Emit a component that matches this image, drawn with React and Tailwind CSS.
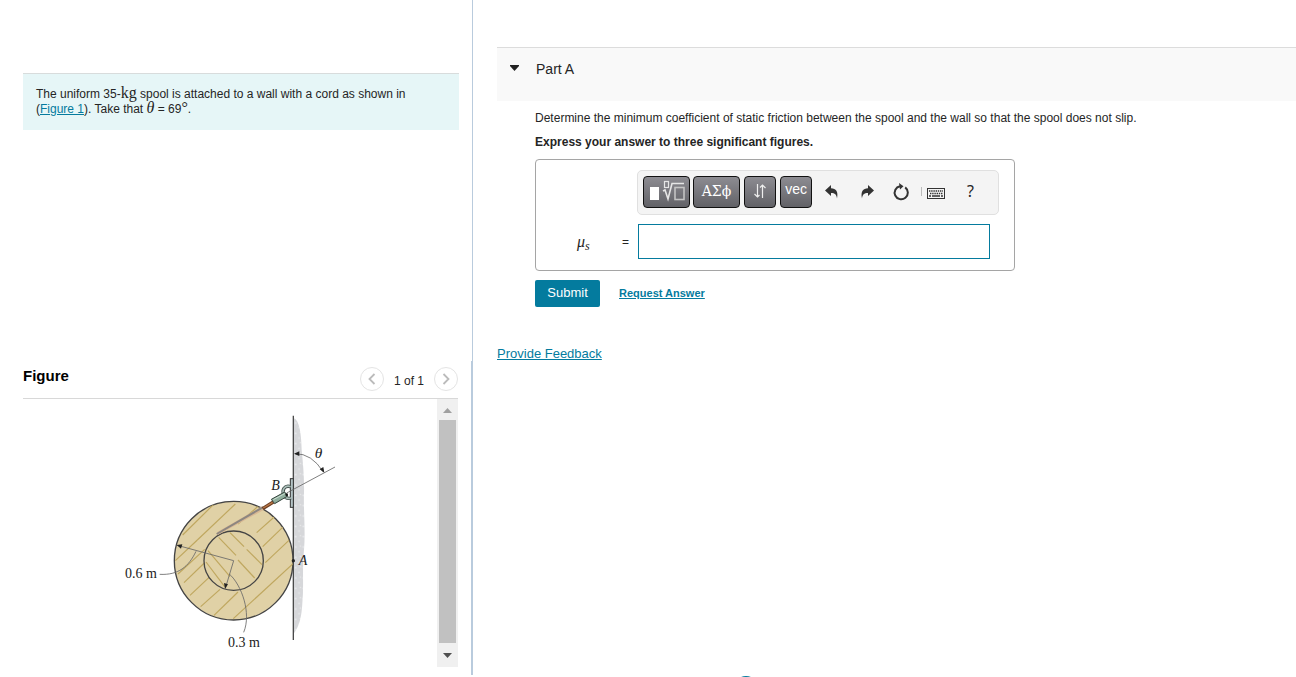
import { useState } from 'react';

const hatchOuter = [
  'M218 405L312 312',
  'M196 482L262 420',
  'M262 420L376 312',
  'M204 522L284 448',
  'M384 372L452 312',
  'M222 548L286 486',
  'M240 586L306 524',
  'M272 620L330 568',
  'M312 646L384 576',
  'M440 398L496 348',
  'M458 440L524 376',
  'M466 488L540 418',
  'M370 656L550 490',
];

const hatchInner = [
  'M326 412L378 466',
  'M360 398L402 440',
  'M410 448L456 494',
  'M294 452L360 530',
  'M288 486L344 560',
  'M384 480L434 534',
];

// Spool resting on the wall, held by the cord at B
const SpoolFigure = () => (
  <svg viewBox="0 0 720 780" width="240" height="260" role="img" aria-label="Spool attached to a wall with a cord" fontFamily="'Liberation Serif', serif" fontSize="42" fill="#222">
    <defs>
      <clipPath id="ring">
        <path clipRule="evenodd" d="M371 304a178 178 0 1 0 .1 0ZM371 393a89 89 0 1 1-.1 0Z" />
      </clipPath>
      <clipPath id="hub"><circle cx="371" cy="482" r="88" /></clipPath>
      <pattern id="grain" width="23" height="31" patternUnits="userSpaceOnUse">
        <rect width="23" height="31" fill="#d6d7da" />
        <circle cx="5" cy="7" r="3" fill="#e8eaec" />
        <circle cx="15" cy="21" r="3" fill="#e3e5e7" />
        <circle cx="19" cy="4" r="2" fill="#eee" />
      </pattern>
    </defs>
    <path d="M552 55C568 62 574 100 575 150C579 190 583 230 582 280C580 330 587 390 582 450C576 510 582 560 577 610C575 650 568 680 552 700Z" fill="url(#grain)" />
    <path d="M550 47V720" stroke="#4a4a4a" strokeWidth="4" />

    <circle cx="371" cy="482" r="178" fill="#e0d1a6" stroke="#444" strokeWidth="4" />
    <g clipPath="url(#ring)" stroke="#bfa75f" strokeWidth="3.5">
      {hatchOuter.map((d) => <path key={d} d={d} />)}
    </g>
    <circle cx="371" cy="482" r="89" fill="#e0d1a6" stroke="#444" strokeWidth="4" />
    <g clipPath="url(#hub)" stroke="#bfa75f" strokeWidth="3.5">
      {hatchInner.map((d) => <path key={d} d={d} />)}
    </g>

    <path d="M322 406L462 329L456 319L322 396Z" fill="#d9b894" />
    <path d="M320 402L460 321" stroke="#8c8680" strokeWidth="6" />
    <path d="M458 326L490 306" stroke="#6b3c20" strokeWidth="10" />
    <path d="M460 324L488 307" stroke="#b87848" strokeWidth="4" />

    <rect x="541" y="236" width="9" height="86" fill="#b4c3c6" stroke="#333" strokeWidth="3" />
    <path d="M542 260C524 254 514 270 522 286C527 296 536 296 543 294" fill="none" stroke="#3e4b48" strokeWidth="10" />
    <path d="M542 260C524 254 514 270 522 286C527 296 536 296 543 294" fill="none" stroke="#a9bdb7" strokeWidth="5" />
    <path d="M484 298L524 276L533 288L494 311Z" fill="#8fae9d" stroke="#34443c" strokeWidth="3" />
    <path d="M490 299L524 281" stroke="#c8dbcf" strokeWidth="3" />
    <circle cx="530" cy="284" r="4" fill="#111" />

    <g fill="none" stroke="#666" strokeWidth="2.5">
      <path d="M530 279L675 201" />
      <path d="M555 161Q605 160 640 216" />
      <path d="M371 482L202 436" />
      <path d="M371 482L346 565" />
      <path d="M149 523C205 526 236 500 258 454" />
      <path d="M358 522C395 555 425 640 401 697" />
    </g>
    <g fill="#222">
      <path d="M552 161L568 154V168Z" />
      <path d="M643 218L629 208L640 201Z" />
      <path d="M200 435L217 433L213 446Z" />
      <path d="M345 567L342 549L354 553Z" />
      <circle cx="550" cy="482" r="5" />
    </g>
    <text x="614" y="174" fontStyle="italic" fontSize="46">θ</text>
    <text x="484" y="270" fontStyle="italic">B</text>
    <text x="566" y="494" fontStyle="italic">A</text>
    <text x="45" y="535">0.6 m</text>
    <text x="354" y="741">0.3 m</text>
  </svg>
);

const UndoIcon = ({ flip }) => (
  <svg width="14" height="14" viewBox="0 0 14 14" fill="#333" className={flip ? '-scale-x-100' : ''} aria-hidden="true">
    <path d="M0 5.5L6 0V3.200C11 3.200 13.5 6.5 12 13.5C11.5 9.5 10 8 6 8V11Z" />
  </svg>
);

const ResetIcon = () => (
  <svg width="18" height="20" viewBox="0 0 18 20" aria-hidden="true">
    <path d="M13.2 5.4A6.6 6.6 0 1 1 8 4.2" fill="none" stroke="#333" strokeWidth="2" />
    <path d="M7 1L11.5 4.200L8 7.500Z" fill="#333" />
  </svg>
);

const KeyboardIcon = () => (
  <svg width="18" height="11" viewBox="0 0 18 11" fill="none" stroke="#333" aria-hidden="true">
    <rect x="0.5" y="0.5" width="17" height="10" strokeWidth="1" />
    <path d="M2 3H16M3 5.5H16" strokeWidth="1.5" strokeDasharray="1.4 0.8" />
    <path d="M2 8H4M5 8H13M14 8H16" strokeWidth="1.5" />
  </svg>
);

const TemplateIcon = () => (
  <svg width="38" height="24" viewBox="0 0 38 24" fill="none" stroke="#e6e6e6" aria-hidden="true">
    <rect x="2" y="8" width="9" height="13" fill="#fff" stroke="none" />
    <rect x="16.500" y="2.5" width="4" height="6" strokeWidth="1.2" />
    <path d="M15 12L17 11L20 20L24 4.500H36" strokeWidth="1.6" />
    <rect x="27" y="8.500" width="9" height="12" stroke="#c4c4c4" strokeWidth="1.6" />
  </svg>
);

const ArrowsIcon = () => (
  <svg width="12" height="14" viewBox="0 0 12 14" fill="none" stroke="#eee" strokeWidth="1.2" aria-hidden="true">
    <path d="M3.500 0V13M0.500 10L3.500 13L5.500 11M8.500 14V1M6 3.500L8.500 1L11.500 4" />
  </svg>
);

const ToolKey = ({ label, wide, children }) => (
  <button
    aria-label={label}
    className={`${wide ? 'w-[47px]' : 'w-8'} h-8 flex items-center justify-center rounded border border-[#111] bg-linear-to-b from-[#8d8c92] to-[#626267] pb-[2px] text-white`}
  >
    {children}
  </button>
);

const Problem = () => (
  <section className="mt-[73px] h-[57px] border-t border-[#d8dcdc] bg-[#e6f6f7] px-[13px] pt-[11px] text-xs leading-[15px]">
    <p className="h-[15px]">
      The uniform 35-<span className="font-['Liberation_Serif',serif] text-base leading-none">kg</span> spool is attached to a wall with a cord as shown in
    </p>
    <p className="h-[15px]">
      (<a href="#figure" className="text-[#047b9e] underline">Figure 1</a>). Take that <i className="font-['Liberation_Serif',serif] text-base leading-none">θ</i> = 69<span className="font-['Liberation_Serif',serif] text-base leading-none">°</span>.
    </p>
  </section>
);

const FigurePanel = () => (
  <section id="figure" className="flex-1 min-h-0 flex flex-col pb-2">
    <div className="h-[38px] flex items-center justify-between border-b border-[#d8d8d8] pb-px">
      <h2 className="text-[15px] font-bold text-black pb-[6px]">Figure</h2>
      <div className="flex items-center gap-[10px] text-xs">
        <button aria-label="Previous figure" className="size-6 flex items-center justify-center rounded-full border border-[#e4e4e4]">
          <svg width="8" height="12" viewBox="0 0 8 12" fill="none" stroke="#bbb" strokeWidth="1.8"><path d="M6.500 1L1.500 6L6.500 11" /></svg>
        </button>
        <span className="pt-[3px]">1 of 1</span>
        <button aria-label="Next figure" className="size-6 flex items-center justify-center rounded-full border border-[#e4e4e4]">
          <svg width="8" height="12" viewBox="0 0 8 12" fill="none" stroke="#bbb" strokeWidth="1.8"><path d="M1.500 1L6.500 6L1.500 11" /></svg>
        </button>
      </div>
    </div>
    <div className="flex-1 min-h-0 flex justify-between">
      <div className="pl-[87px] pt-px">
        <SpoolFigure />
      </div>
      <div className="w-[21px] flex flex-col items-center bg-[#f0f0f0]">
        <svg width="9" height="21" viewBox="0 0 9 21" fill="#a0a0a0" aria-hidden="true"><path d="M4.500 9L9 14H0Z" /></svg>
        <div className="w-[17px] flex-1 bg-[#c1c1c1]"></div>
        <svg width="9" height="24" viewBox="0 0 9 24" fill="#505050" aria-hidden="true"><path d="M0 10H9L4.500 15Z" /></svg>
      </div>
    </div>
  </section>
);

const AnswerBox = ({ answer, setAnswer }) => (
  <div className="mt-[9px] w-[480px] max-w-full h-28 rounded border border-[#a5a5a5] pt-[10px] pr-[15px]">
    <div className="ml-[101px] h-[45px] flex items-center rounded-[5px] border border-[#e0e0e0] bg-[#f4f4f4] pl-[5px] pb-[2px]">
      <div className="flex gap-[3px]">
        <ToolKey label="Templates" wide><TemplateIcon /></ToolKey>
        <ToolKey wide><span className="font-['DejaVu_Serif',serif] text-sm">ΑΣϕ</span></ToolKey>
        <div className="flex gap-1 pl-px">
          <ToolKey label="Arrows"><ArrowsIcon /></ToolKey>
          <ToolKey><span className="text-sm pb-1">vec</span></ToolKey>
        </div>
      </div>
      <button aria-label="Undo" className="ml-[13px]"><UndoIcon /></button>
      <button aria-label="Redo" className="ml-[21px]"><UndoIcon flip /></button>
      <button aria-label="Reset" className="ml-[18px]"><ResetIcon /></button>
      <span className="ml-[11px] h-[9px] border-l border-[#bbb]"></span>
      <button aria-label="Keyboard shortcuts" className="ml-[5px] pt-1"><KeyboardIcon /></button>
      <button aria-label="Help" className="ml-[22px] pb-px font-['Noto_Sans',sans-serif] text-base">?</button>
    </div>
    <div className="mt-[9px] flex items-center">
      <label htmlFor="answer" className="w-[102px] flex items-center justify-between pl-[41px] pr-[9px] text-xs">
        <i className="font-['Liberation_Serif',serif] text-base leading-4">μ<sub className="text-xs leading-none">s</sub></i>
        <span>=</span>
      </label>
      <input
        id="answer"
        value={answer}
        onChange={(e) => setAnswer(e.target.value)}
        className="w-[352px] h-[35px] border border-[#047b9e] bg-white px-2 outline-none"
      />
    </div>
  </div>
);

const App = () => {
  const [answer, setAnswer] = useState('')
  const [open, setOpen] = useState(true)

  return (
    <div className="relative flex h-screen overflow-hidden bg-white font-['Liberation_Sans',Arial,sans-serif] text-[#252525]">
      <aside className="w-[36.5%] shrink-0 flex flex-col pb-[2px]">
        <div className="h-[361px] border-r border-[#b9cbdd] pl-[23px] pr-[13px]">
          <Problem />
        </div>
        <div className="flex-1 min-h-0 flex flex-col border-r-2 border-[#b9cbdd] pl-[23px] pr-[13px]">
          <FigurePanel />
        </div>
      </aside>

      <main className="flex-1 min-w-0 pl-6 pt-[47px]">
        <div className="h-[54px] border-t border-[#dcdcdc] bg-[#f9f9f9]">
          <button onClick={() => setOpen(!open)} className="flex items-center gap-[17px] pl-[13px] pt-[11px] text-sm">
            <svg width="9" height="6" viewBox="0 0 9 6" fill="#222" aria-hidden="true" className="mb-[2px]"><path d="M0 0H9V1L4.500 6L0 1Z" /></svg>
            Part A
          </button>
        </div>
        {open && (
          <div className="pl-[38px] pt-[9px] text-xs">
            <p>Determine the minimum coefficient of static friction between the spool and the wall so that the spool does not slip.</p>
            <p className="mt-2 font-bold">Express your answer to three significant figures.</p>
            <AnswerBox answer={answer} setAnswer={setAnswer} />
            <div className="mt-[9px] flex items-center gap-[19px]">
              <button className="h-[27px] w-[65px] rounded-[2px] bg-[#047b9e] pb-px text-[13px] text-white">Submit</button>
              <a href="#request" className="text-[11px] font-bold text-[#047b9e] underline">Request Answer</a>
            </div>
          </div>
        )}
        <a href="#feedback" className="mt-[37px] inline-block text-[13px] text-[#047b9e] underline">Provide Feedback</a>
      </main>

      {/* top edge of the round logo in the footer */}
      <div className="absolute left-[57%] -bottom-[23px] size-6 -ml-[5px] rounded-full bg-[#047b9e]"></div>
    </div>
  );
};

export default App;
